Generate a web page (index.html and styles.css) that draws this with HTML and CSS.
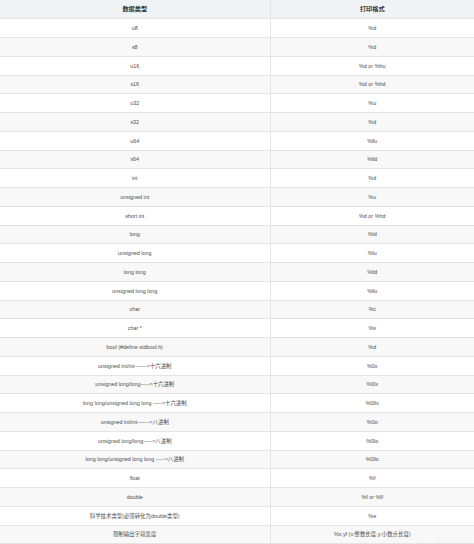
FILE: index.html
```html
<!DOCTYPE html>
<html lang="zh">
<head>
<meta charset="utf-8">
<title>数据类型与打印格式</title>
<link rel="stylesheet" href="styles.css">
</head>
<body>
<div class="wrap">
<table class="fmt">
<thead>
<tr><th class="c1">数据类型</th><th class="c2">打印格式</th></tr>
</thead>
<tbody>
<tr><td>u8</td><td>%d</td></tr>
<tr><td>s8</td><td>%d</td></tr>
<tr><td>u16</td><td>%d or %hu</td></tr>
<tr><td>s16</td><td>%d or %hd</td></tr>
<tr><td>u32</td><td>%u</td></tr>
<tr><td>s32</td><td>%d</td></tr>
<tr><td>u64</td><td>%llu</td></tr>
<tr><td>s64</td><td>%lld</td></tr>
<tr><td>int</td><td>%d</td></tr>
<tr><td>unsigned int</td><td>%u</td></tr>
<tr><td>short int</td><td>%d or %hd</td></tr>
<tr><td>long</td><td>%ld</td></tr>
<tr><td>unsigned long</td><td>%lu</td></tr>
<tr><td>long long</td><td>%lld</td></tr>
<tr><td>unsigned long long</td><td>%llu</td></tr>
<tr><td>char</td><td>%c</td></tr>
<tr><td>char *</td><td>%s</td></tr>
<tr><td>bool (#define stdbool.h)</td><td>%d</td></tr>
<tr><td>unsigned int/int-------&gt;十六进制</td><td>%0x</td></tr>
<tr><td>unsigned long/long-----&gt;十六进制</td><td>%0lx</td></tr>
<tr><td>long long/unsigned long long -----&gt;十六进制</td><td>%0llx</td></tr>
<tr><td>unsigned int/int-------&gt;八进制</td><td>%0o</td></tr>
<tr><td>unsigned long/long-----&gt;八进制</td><td>%0lo</td></tr>
<tr><td>long long/unsigned long long -----&gt;八进制</td><td>%0llo</td></tr>
<tr><td>float</td><td>%f</td></tr>
<tr><td>double</td><td>%f or %lf</td></tr>
<tr><td>科学技术类型(必须转化为double类型)</td><td>%e</td></tr>
<tr><td>限制输出字段宽度</td><td>%x.yf (x:整数长度,y:小数点长度)</td></tr>
</tbody>
</table>
<span class="mark">https://blog.csdn.net/qq_43194800</span>
</div>
</body>
</html>
```

FILE: styles.css
```css
html, body {
  margin: 0;
  padding: 0;
  background: #ffffff;
}
.wrap {
  position: relative;
  width: 474px;
  height: 544px;
  overflow: hidden;
}
.fmt {
  width: 474px;
  border-collapse: collapse;
  table-layout: fixed;
  font-family: "Liberation Sans", "Noto Sans CJK SC", sans-serif;
  font-size: 5.4px;
  line-height: 6px;
  color: #4d4d4d;
}
.fmt tr {
  height: 18.76px;
}
.fmt th, .fmt td {
  border: 1px solid #e4e4e4;
  padding: 0;
  height: 17.76px;
  box-sizing: border-box;
  text-align: center;
  vertical-align: middle;
  white-space: nowrap;
  overflow: hidden;
}
.fmt tr > :first-child { border-left: none; }
.fmt tr > :last-child { border-right: none; }
.fmt thead tr > * { border-top: none; }
.fmt th {
  background: #eff3f5;
  color: #333333;
  font-weight: bold;
  font-size: 6.2px;
}
.fmt .c1 { width: 270px; }
.fmt tbody tr:nth-child(2n) { background: #f8f8f8; }
.mark {
  position: absolute;
  right: 2px;
  bottom: 1px;
  font-family: "Liberation Sans", sans-serif;
  font-size: 5px;
  line-height: 6px;
  color: rgba(0, 0, 0, 0.06);
}
```
